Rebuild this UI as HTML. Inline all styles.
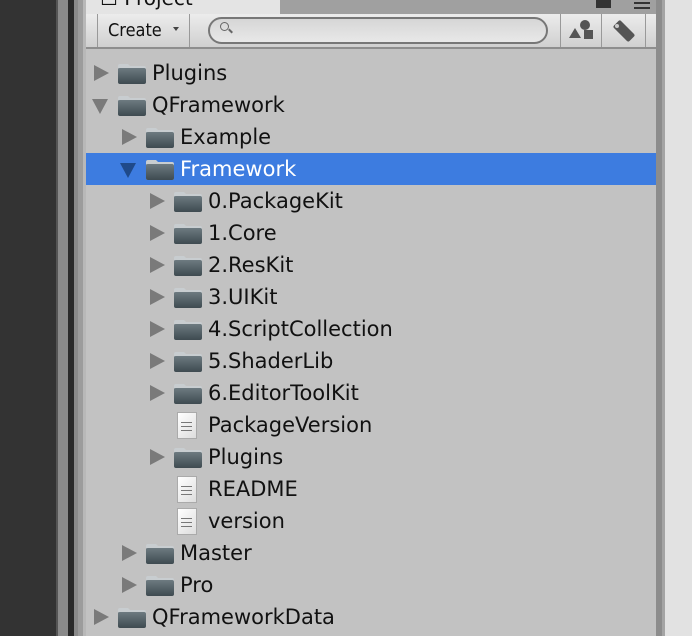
<!DOCTYPE html>
<html><head><meta charset="utf-8"><style>
body{margin:0;width:692px;height:636px;overflow:hidden;background:#333;position:relative;font-family:"DejaVu Sans","Liberation Sans",sans-serif}
.a{position:absolute}
.row{position:absolute;left:86px;width:570px;height:32px}
.row span.t{position:absolute;top:4px;font-size:21px;color:#111;white-space:nowrap}
.tri{position:absolute;width:0;height:0}
.tr{border-top:8px solid transparent;border-bottom:8px solid transparent;border-left:15px solid #7a7a7a;top:8px}
.td{border-left:8px solid transparent;border-right:8px solid transparent;border-top:15px solid #7a7a7a;top:10px}
.fold{position:absolute;top:6px;width:30px;height:21px}
.doc{position:absolute;top:3px;width:20px;height:27px;background:linear-gradient(135deg,#fff,#ddd);border:1px solid #aaa;box-sizing:border-box}
.doc i{position:absolute;left:3px;right:4px;height:1px;background:#777}
</style></head><body>
<div class="a" style="left:56px;top:0;width:2px;height:636px;background:#555"></div>
<div class="a" style="left:58px;top:0;width:10px;height:636px;background:#8a8a8a"></div>
<div class="a" style="left:68px;top:0;width:6px;height:636px;background:#2a2a2a"></div>
<div class="a" style="left:74px;top:0;width:4px;height:636px;background:#8a8a8a"></div>
<div class="a" style="left:78px;top:0;width:5px;height:636px;background:#9c9c9c"></div>
<div class="a" style="left:83px;top:0;width:3px;height:636px;background:#b8b8b8"></div>
<div class="a" style="left:86px;top:0;width:570px;height:636px;background:#c2c2c2"></div>
<div class="a" style="left:656px;top:0;width:6px;height:636px;background:#8c8c8c"></div>
<div class="a" style="left:662px;top:0;width:3px;height:636px;background:#a4a4a4"></div>
<div class="a" style="left:665px;top:0;width:27px;height:636px;background:#e2e2e2"></div>
<!-- tab strip -->
<div class="a" style="left:86px;top:0;width:570px;height:14px;background:#a0a0a0"></div>
<div class="a" style="left:86px;top:0;width:194px;height:14px;background:#e4e4e4"></div>
<div class="a" style="left:100px;top:-14px;font-size:20px;color:#111">☐ Project</div>
<div class="a" style="left:596px;top:0;width:15px;height:8px;background:#333"></div>
<div class="a" style="left:634px;top:2px;width:16px;height:2px;background:#333"></div>
<div class="a" style="left:634px;top:7px;width:16px;height:2px;background:#333"></div>
<!-- toolbar -->
<div class="a" style="left:86px;top:14px;width:570px;height:33px;background:linear-gradient(#ececec,#d0d0d0);border-bottom:2px solid #8e8e8e"></div>
<div class="a" style="left:97px;top:14px;width:1px;height:33px;background:#999"></div>
<div class="a" style="left:189px;top:14px;width:1px;height:33px;background:#999"></div>
<div class="a" style="left:108px;top:20px;font-size:18px;color:#111;font-family:'DejaVu Sans Condensed','DejaVu Sans',sans-serif">Create</div>
<div class="a" style="left:173px;top:27px;border-left:3px solid transparent;border-right:3px solid transparent;border-top:4px solid #444"></div>
<div class="a" style="left:208px;top:17px;width:340px;height:27px;border:2px solid #777;border-radius:14px;background:linear-gradient(#d6d6d6,#e8e8e8);box-sizing:border-box"></div>
<div class="a" style="left:220px;top:22px;width:7px;height:7px;border:1.5px solid #666;border-radius:50%"></div>
<div class="a" style="left:228px;top:30px;width:5px;height:2px;background:#666;transform:rotate(45deg)"></div>
<div class="a" style="left:560px;top:14px;width:1px;height:33px;background:#999"></div>
<div class="a" style="left:601px;top:14px;width:1px;height:33px;background:#999"></div>
<div class="a" style="left:645px;top:14px;width:1px;height:33px;background:#999"></div>
<div class="a" style="left:580px;top:20px;width:10px;height:10px;border-radius:50%;background:#555"></div>
<div class="a" style="left:584px;top:30px;width:9px;height:9px;background:#555"></div>
<div class="a" style="left:569px;top:28px;border-left:6px solid transparent;border-right:6px solid transparent;border-bottom:10px solid #555"></div>
<div class="a" style="left:613px;top:26px;width:22px;height:10px;background:#555;transform:rotate(45deg);border-radius:2px"></div>
<div class="a" style="left:615px;top:24px;width:4px;height:4px;background:#ccc;border-radius:50%"></div>
<!-- selection -->
<div class="a" style="left:86px;top:153px;width:570px;height:32px;background:#3d7ce0"></div>
<svg width="0" height="0" style="position:absolute"><defs><linearGradient id="g" x1="0" y1="0" x2="0" y2="1"><stop offset="0" stop-color="#6d7a80"/><stop offset="1" stop-color="#3e4a50"/></linearGradient></defs></svg>
<div id="rows"></div>
<script>
var items=[[0,'r','f','Plugins'],[0,'d','f','QFramework'],[1,'r','f','Example'],[1,'d','f','Framework'],[2,'r','f','0.PackageKit'],[2,'r','f','1.Core'],[2,'r','f','2.ResKit'],[2,'r','f','3.UIKit'],[2,'r','f','4.ScriptCollection'],[2,'r','f','5.ShaderLib'],[2,'r','f','6.EditorToolKit'],[2,'','d','PackageVersion'],[2,'r','f','Plugins'],[2,'','d','README'],[2,'','d','version'],[1,'r','f','Master'],[1,'r','f','Pro'],[0,'r','f','QFrameworkData']];
var h='';
items.forEach(function(it,i){var top=57+i*32,x=it[0]*28,sel=i==3;
h+='<div class="row" style="top:'+top+'px">';
if(it[1]=='r')h+='<div class="tri tr" style="left:'+(8+x)+'px"></div>';
if(it[1]=='d')h+='<div class="tri td" style="left:'+(6+x)+'px;border-top-color:'+(sel?'#1f4a8a':'#7a7a7a')+'"></div>';
if(it[2]=='f')h+='<svg class="fold" style="left:'+(31+x)+'px" viewBox="0 0 30 21"><path d="M1 3 Q1 1 3 1 L11 1 L13 3 L27 3 Q29 3 29 5 L29 19 Q29 21 27 21 L3 21 Q1 21 1 19Z" fill="#c8cdd0"/><path d="M1 6 Q1 5 3 5 L27 5 Q29 5 29 7 L29 19 Q29 21 27 21 L3 21 Q1 21 1 19Z" fill="url(#g)"/></svg>';
else h+='<div class="doc" style="left:'+(35+x)+'px"><i style="top:9px"></i><i style="top:13px"></i><i style="top:17px"></i></div>';
h+='<span class="t" style="left:'+(66+x)+'px;color:'+(sel?'#fff':'#111')+'">'+it[3]+'</span></div>';});
document.getElementById('rows').innerHTML=h;
</script>
</body></html>
